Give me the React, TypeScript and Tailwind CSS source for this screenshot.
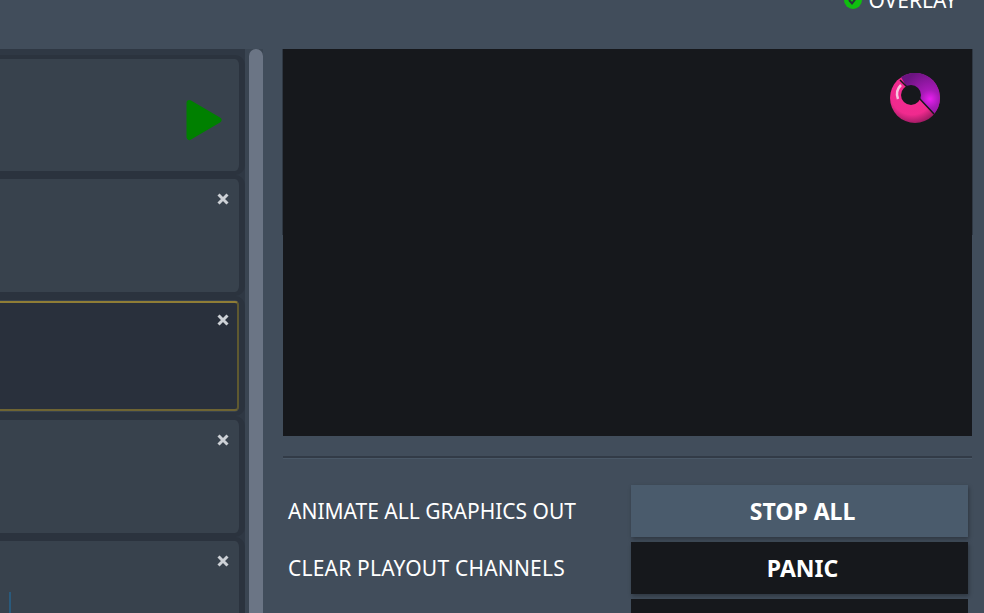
import React from 'react';

function CloseIcon() {
    return (
        <svg viewBox="0 0 12 12" className="absolute right-[10px] top-[14px] w-3 h-3">
            <path d="M1.5 1.5 L10.5 10.5 M10.5 1.5 L1.5 10.5" stroke="#cdd1d6" strokeWidth="3" />
        </svg>
    );
}

function PlayIcon() {
    return (
        <svg viewBox="0 0 36 42" className="absolute right-[17px] top-[40px] w-9 h-[42px]">
            <path d="M3.5 4 L32.5 21 L3.5 38 Z" fill="#008000" stroke="#008000" strokeWidth="6" strokeLinejoin="round" />
        </svg>
    );
}

function Logo() {
    return (
        <svg viewBox="0 0 50 50" className="absolute right-[32px] top-[24px] w-[50px] h-[50px]">
            <defs>
                <radialGradient id="pink" cx="22" cy="20" r="31" gradientUnits="userSpaceOnUse">
                    <stop offset="0" stopColor="#f42c92" />
                    <stop offset="0.7" stopColor="#f02a8e" />
                    <stop offset="1" stopColor="#9c1a62" />
                </radialGradient>
                <radialGradient id="purple" cx="40" cy="26" r="30" gradientUnits="userSpaceOnUse">
                    <stop offset="0" stopColor="#ea1ff0" />
                    <stop offset="0.3" stopColor="#a81ab8" />
                    <stop offset="1" stopColor="#6a1480" />
                </radialGradient>
            </defs>
            <circle cx="25" cy="25" r="25" fill="url(#pink)" />
            <path d="M11 4 A25 25 0 0 1 50 25 A25 25 0 0 1 44 41 L28 24 L16 13 Z" fill="url(#purple)" />
            <path d="M10 7 L18 15 M29 25 L44 41" stroke="#16181c" strokeWidth="1.5" />
            <circle cx="21" cy="22" r="10" fill="#16181c" />
            <path d="M8 26 A13 13 0 0 1 11 12" stroke="#f6c6e0" strokeWidth="2.5" fill="none" />
        </svg>
    );
}

function Card({ selected, children }: { selected?: boolean; children?: React.ReactNode }) {
    return (
        <div className="relative h-[120.5px] shrink-0 rounded-[10px] border-y-4 border-l-4 border-r-[6px] border-[#2b333e] bg-[#38424d]">
            {selected && (
                <div className="absolute inset-x-0 inset-y-px rounded-sm border-2 border-t-[#8f7d36] border-b-[#6e6433] border-x-[#5f5930] bg-[#29303c]" />
            )}
            {children}
        </div>
    );
}

export default function App() {
    return (
        <div
            className="w-[984px] h-[613px] overflow-hidden bg-[#414d5b] text-white"
            style={{ fontFamily: '"Noto Sans", sans-serif' }}
        >
            {/* Top bar, scrolled off the top */}
            <div className="h-[49px] flex justify-end pr-[27px]">
                <div className="-mt-[15px] h-[30px] flex items-center gap-[6px] text-[21px] leading-none">
                    <svg viewBox="0 0 18 18" className="w-[18px] h-[18px]">
                        <circle cx="9" cy="9" r="9" fill="#0fbf0f" />
                        <path d="M5 9 L8 12.5 L13 6" stroke="#26303a" strokeWidth="2" fill="none" />
                    </svg>
                    <span>OVERLAY</span>
                </div>
            </div>

            <div className="flex h-[564px]">
                {/* Item list */}
                <div className="w-[263px] shrink-0 flex overflow-hidden bg-[#3a4552]">
                    <div className="w-[249px] shrink-0 overflow-hidden">
                        <div className="w-[245px] h-full bg-[#2f3844] pt-[5.75px] flex flex-col">
                            <div className="-ml-4 flex flex-col">
                                <Card>
                                    <PlayIcon />
                                </Card>
                                <Card>
                                    <CloseIcon />
                                </Card>
                                <Card selected>
                                    <CloseIcon />
                                </Card>
                                <Card>
                                    <CloseIcon />
                                </Card>
                                <Card>
                                    <CloseIcon />
                                    <div className="absolute left-[21px] top-[51px] w-[2px] h-[30px] bg-[#2a5a7c]" />
                                </Card>
                            </div>
                        </div>
                    </div>
                    <div className="w-[14px] h-full rounded-t-[7px] bg-[#6b7585]" />
                </div>

                {/* Preview and controls */}
                <div className="flex-1 pl-[20px] pr-[12px] flex flex-col">
                    <div className="relative h-[387px] shrink-0 flex flex-col">
                        <div className="h-[186px] -mx-px border-x border-[#2f3843] bg-[#16181c]" />
                        <div className="flex-1 bg-[#16181c]" />
                        <Logo />
                    </div>
                    <div className="mt-5 h-[3px] shrink-0 border-t-2 border-[#323b47] border-b border-b-[#4a5867]" />
                    <div className="mt-[26px] flex flex-col gap-[5px]">
                        <div className="flex items-center">
                            <span className="w-[348px] pl-[5px] pt-[2px] text-[21px]">ANIMATE ALL GRAPHICS OUT</span>
                            <button className="w-[337px] h-[52px] pl-[6px] bg-[#4a5b6c] text-[23px] font-bold shadow-[1px_2px_4px_rgba(0,0,0,0.3)]">
                                STOP ALL
                            </button>
                        </div>
                        <div className="flex items-center">
                            <span className="w-[348px] pl-[5px] pt-[2px] text-[21px] tracking-[0.2px]">CLEAR PLAYOUT CHANNELS</span>
                            <button className="w-[337px] h-[52px] pl-[6px] bg-[#16181c] text-[23px] font-bold shadow-[1px_2px_4px_rgba(0,0,0,0.3)]">
                                PANIC
                            </button>
                        </div>
                        <div className="flex items-center">
                            <span className="w-[348px]" />
                            <button className="w-[337px] h-[52px] bg-[#16181c]" />
                        </div>
                    </div>
                </div>
            </div>
        </div>
    );
}
